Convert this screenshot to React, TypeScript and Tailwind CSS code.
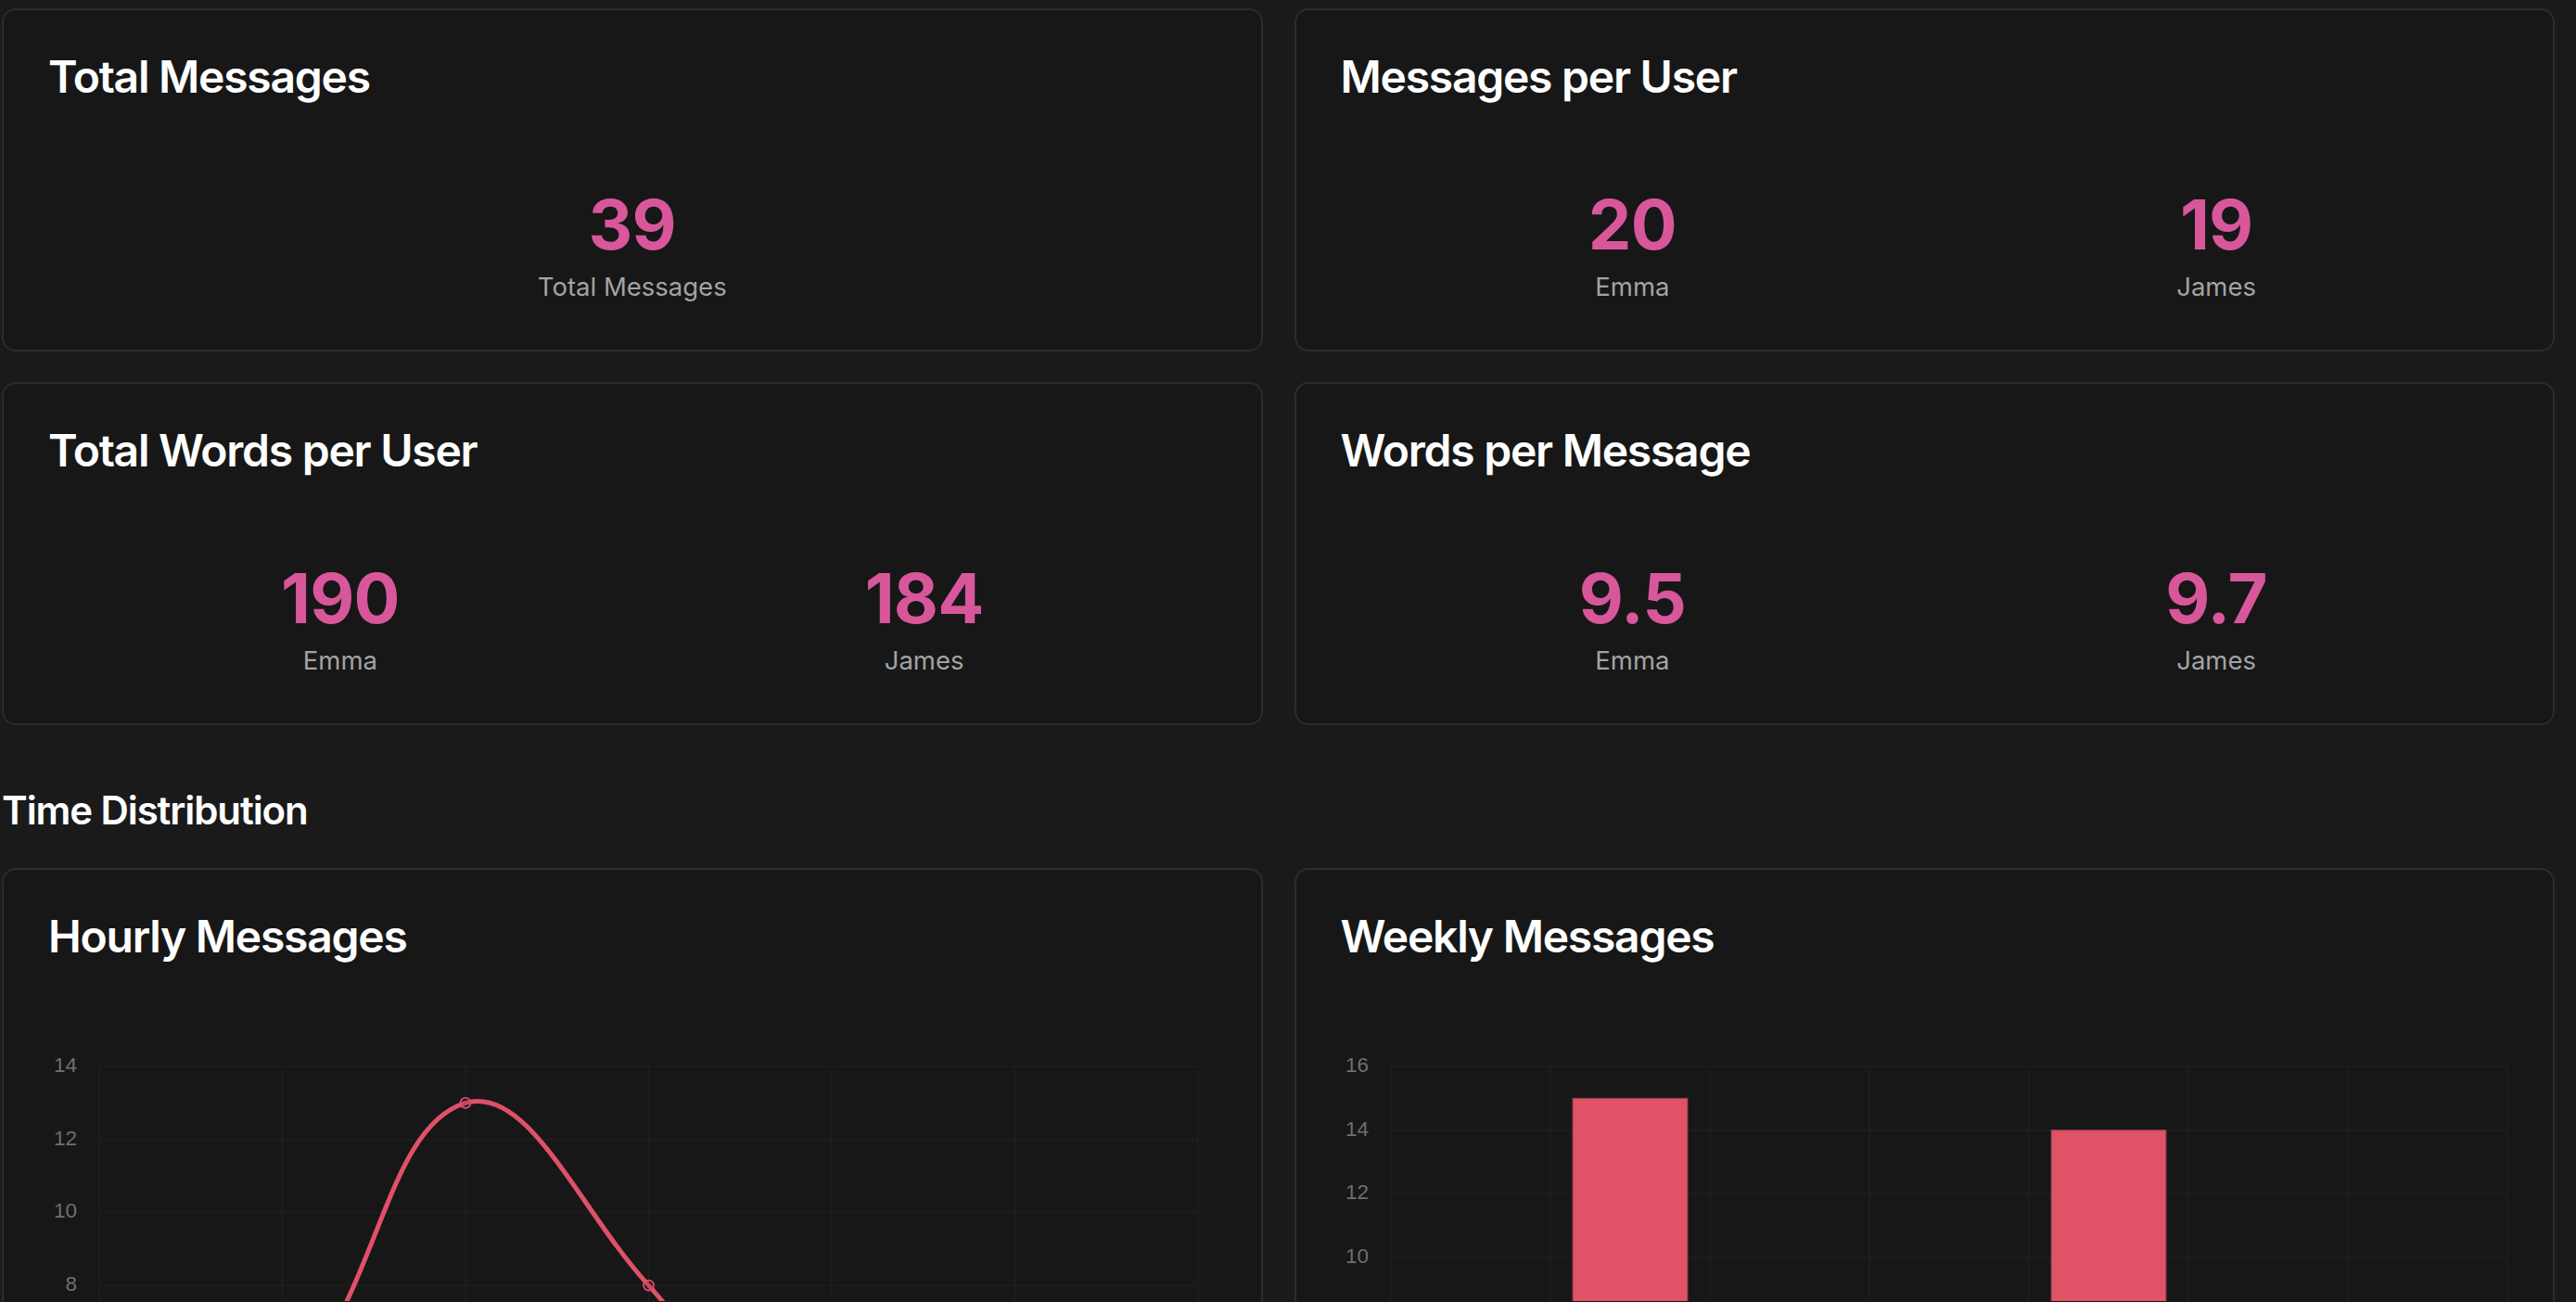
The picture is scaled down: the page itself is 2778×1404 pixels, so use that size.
import React from 'react';

const FONT = { fontFamily: 'Inter, "Noto Sans", sans-serif' };
const TICK_FONT = '"Liberation Sans", Arial, sans-serif';

// chart area: svg starts 96px under the card title and stops at the bottom of the window
const CHART_H = 273;

type Pt = { x: number; y: number };

function Card({ title, children }: { title: string; children: React.ReactNode }) {
  return (
    <div className="rounded-[15px] border-2 border-[#2c2c2c] bg-[#171717] p-[48px]">
      <h3 className="text-[48px] leading-none font-semibold tracking-[-0.026em] text-white">{title}</h3>
      {children}
    </div>
  );
}

function Stat({ value, label }: { value: string; label: string }) {
  return (
    <div className="flex flex-col items-center">
      <span className="text-[74px] leading-[74px] font-bold tracking-[-0.01em] text-[#d8579b]">{value}</span>
      <span className="mt-[10px] text-[27.5px] leading-[40px] text-[#a3a3a3]">{label}</span>
    </div>
  );
}

// chart.js style spline control points
function splinePath(pts: Pt[], t = 0.4) {
  const cps = pts.map((p, i) => {
    const p0 = pts[i - 1] ?? p;
    const p2 = pts[i + 1] ?? p;
    const d01 = Math.hypot(p.x - p0.x, p.y - p0.y);
    const d12 = Math.hypot(p2.x - p.x, p2.y - p.y);
    const s01 = d01 + d12 ? d01 / (d01 + d12) : 0;
    const s12 = d01 + d12 ? d12 / (d01 + d12) : 0;
    const fa = t * s01;
    const fb = t * s12;
    return {
      prev: { x: p.x - fa * (p2.x - p0.x), y: p.y - fa * (p2.y - p0.y) },
      next: { x: p.x + fb * (p2.x - p0.x), y: p.y + fb * (p2.y - p0.y) },
    };
  });
  let d = `M${pts[0].x},${pts[0].y}`;
  for (let i = 1; i < pts.length; i++) {
    const a = cps[i - 1].next;
    const b = cps[i].prev;
    d += ` C${a.x},${a.y} ${b.x},${b.y} ${pts[i].x},${pts[i].y}`;
  }
  return d;
}

function YAxis({ max, unit, left, right, labelX }: { max: number; unit: number; left: number; right: number; labelX: number }) {
  const ticks: number[] = [];
  for (let v = max; v >= 0; v -= 2) ticks.push(v);
  return (
    <g>
      {ticks.map((v) => {
        const y = 20 + (max - v) * unit;
        return (
          <g key={v}>
            <line x1={left} x2={right} y1={y} y2={y} stroke="#1f1f1f" strokeWidth={1.5} />
            {y + 12 < CHART_H && (
              <text x={labelX} y={y} textAnchor="end" dominantBaseline="middle" fontFamily={TICK_FONT} fontSize={22.5} fill="#6f6f6f">
                {v}
              </text>
            )}
          </g>
        );
      })}
    </g>
  );
}

function HourlyChart() {
  const values = [4, 5, 13, 8, 2, 3, 4];
  const left = 55;
  const step = 197.5;
  const unit = 39.35;
  const pts = values.map((v, i) => ({ x: left + i * step, y: 20 + (14 - v) * unit }));
  const right = left + step * 6;
  return (
    <svg width={1260} height={CHART_H} className="mt-[96px] block overflow-hidden">
      {values.map((_, i) => (
        <line key={i} x1={left + i * step} x2={left + i * step} y1={20} y2={CHART_H} stroke="#1f1f1f" strokeWidth={1.5} />
      ))}
      <YAxis max={14} unit={unit} left={left} right={right} labelX={31} />
      <path d={splinePath(pts)} fill="none" stroke="#e0506a" strokeWidth={5} strokeLinejoin="round" />
      {pts.map((p, i) => (
        <circle key={i} cx={p.x} cy={p.y} r={5.5} fill="rgba(0,0,0,0.1)" stroke="#e0506a" strokeWidth={1.75} />
      ))}
    </svg>
  );
}

function WeeklyChart() {
  const values = [3, 15, 2, 4, 14, 1, 0];
  const left = 54;
  const step = 172;
  const unit = 34.35;
  const right = left + step * 7;
  return (
    <svg width={1260} height={CHART_H} className="mt-[96px] block overflow-hidden">
      {Array.from({ length: 8 }).map((_, i) => (
        <line key={i} x1={left + i * step} x2={left + i * step} y1={20} y2={CHART_H} stroke="#1f1f1f" strokeWidth={1.5} />
      ))}
      <YAxis max={16} unit={unit} left={left} right={right} labelX={30} />
      {values.map((v, i) => {
        const y = 20 + (16 - v) * unit;
        if (y >= CHART_H) return null;
        return (
          <rect
            key={i}
            x={left + i * step + step * 0.14}
            y={y}
            width={step * 0.72}
            height={CHART_H - y + 4}
            fill="#e05266"
            stroke="#8f4450"
            strokeWidth={1}
          />
        );
      })}
    </svg>
  );
}

export default function App() {
  return (
    <div className="min-h-screen bg-[#1a1a1a] pt-[9px] pl-[2px] pr-[23px]" style={FONT}>
      <div className="grid grid-cols-2 gap-x-[34px] gap-y-[33px]">
        <Card title="Total Messages">
          <div className="mt-[98px] flex justify-center">
            <Stat value="39" label="Total Messages" />
          </div>
        </Card>
        <Card title="Messages per User">
          <div className="mt-[98px] grid grid-cols-2">
            <Stat value="20" label="Emma" />
            <Stat value="19" label="James" />
          </div>
        </Card>
        <Card title="Total Words per User">
          <div className="mt-[98px] grid grid-cols-2">
            <Stat value="190" label="Emma" />
            <Stat value="184" label="James" />
          </div>
        </Card>
        <Card title="Words per Message">
          <div className="mt-[98px] grid grid-cols-2">
            <Stat value="9.5" label="Emma" />
            <Stat value="9.7" label="James" />
          </div>
        </Card>
      </div>

      <h2 className="mt-[71px] mb-[41px] text-[42px] leading-none font-semibold tracking-[-0.026em] text-white">Time Distribution</h2>

      <div className="grid grid-cols-2 gap-x-[34px] pb-[40px]">
        <Card title="Hourly Messages">
          <HourlyChart />
        </Card>
        <Card title="Weekly Messages">
          <WeeklyChart />
        </Card>
      </div>
    </div>
  );
}
